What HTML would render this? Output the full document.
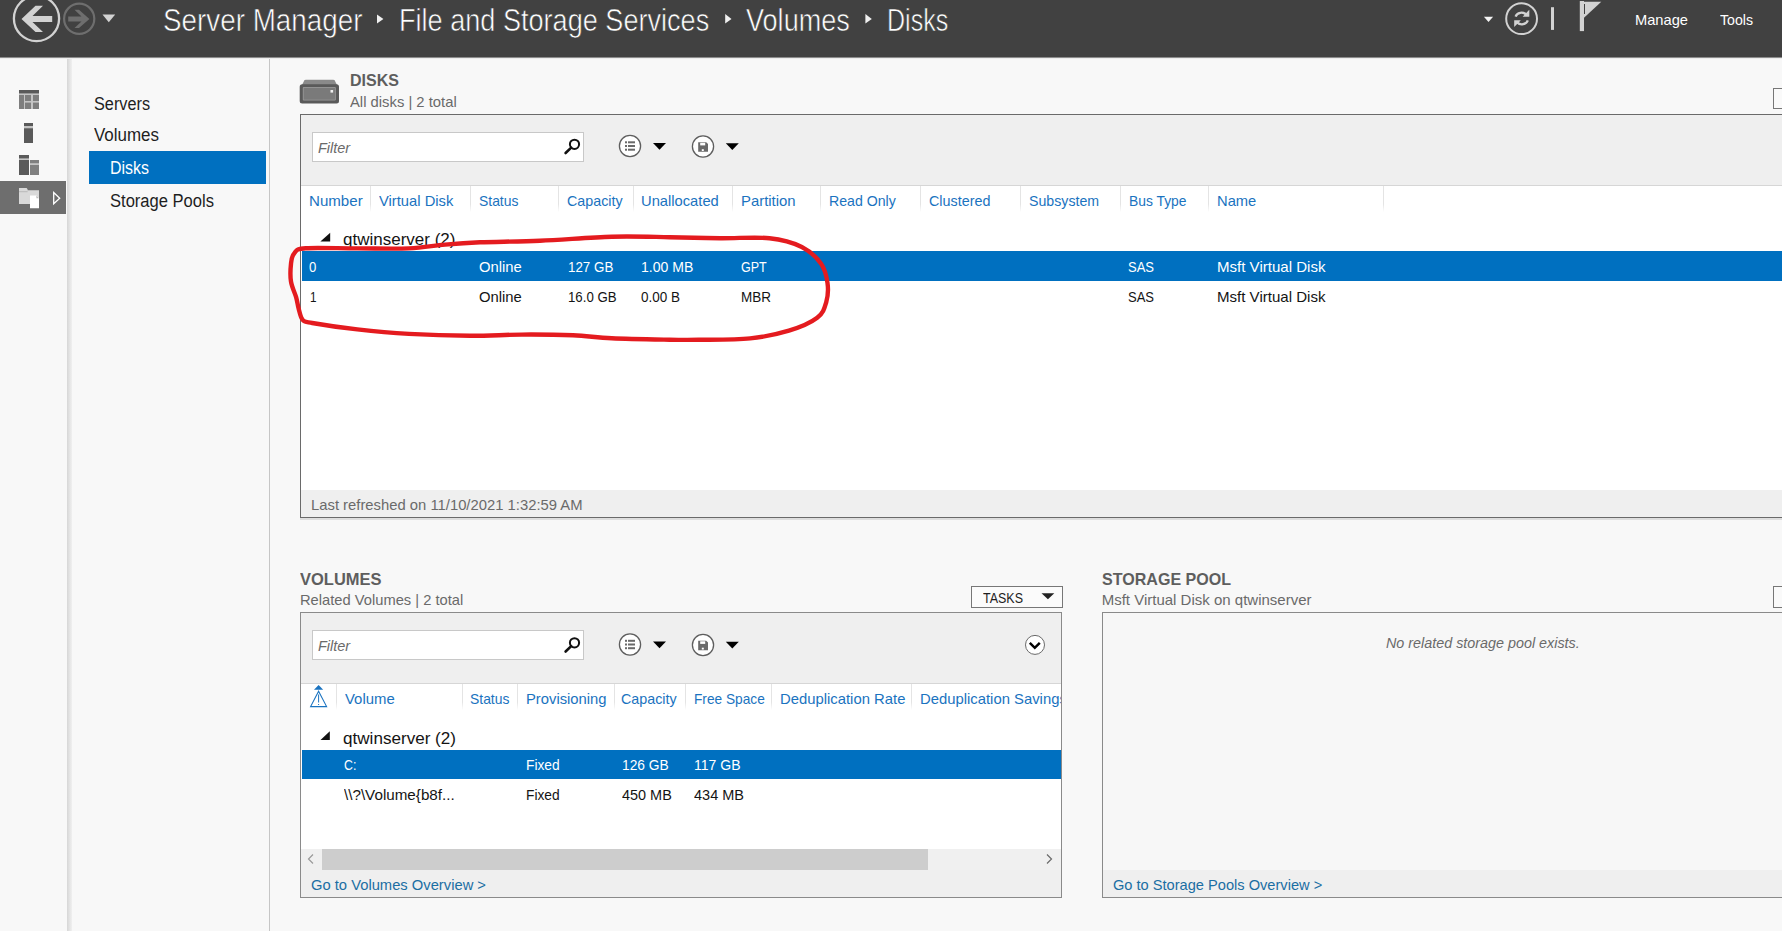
<!DOCTYPE html>
<html><head><meta charset="utf-8"><style>
html,body{margin:0;padding:0;}
body{width:1782px;height:931px;overflow:hidden;position:relative;background:#f8f8f8;font-family:"Liberation Sans",sans-serif;}
.t{position:absolute;white-space:nowrap;transform-origin:0 0;}
</style></head><body>
<div style="position:absolute;left:0px;top:0px;width:1782px;height:57px;background:#414141"></div>
<div style="position:absolute;left:0px;top:57px;width:1782px;height:1px;background:#8c8c8c"></div>
<div style="position:absolute;left:0px;top:58px;width:1782px;height:1px;background:#ececec"></div>
<svg style="position:absolute;left:0;top:0" width="130" height="57" viewBox="0 0 130 57">
<circle cx="36.5" cy="18.5" r="22.6" fill="none" stroke="#d2d2d2" stroke-width="2.3"/>
<path d="M21.5 19 L35.5 5.8 L43 5.8 L32.5 16 L52.2 16 L52.2 22 L32.5 22 L43 32 L35.5 32 Z" fill="#d2d2d2"/>
<circle cx="79.2" cy="18.8" r="15.1" fill="none" stroke="#6e6e6e" stroke-width="2.2"/>
<path d="M89.4 19 L79 9.8 L74.5 9.8 L81.5 16.5 L68.2 16.5 L68.2 21.5 L81.5 21.5 L74.5 28.1 L79 28.1 Z" fill="#6e6e6e"/>
<path d="M102.5 14.6 L115.2 14.6 L108.8 22.2 Z" fill="#d2d2d2"/>
</svg>
<span class="t" style="left:162.50px;top:4.56px;font-size:31px;line-height:31px;color:#ffffff;transform:scaleX(0.8976);-webkit-text-stroke:0.6px #414141;">Server Manager</span>
<svg style="position:absolute;left:0;top:0" width="1000" height="57"><path d="M377 14.6 L383.4 19.1 L377 23.6 Z" fill="#f0f0f0"/><path d="M725.2 14.1 L731.5 18.9 L725.2 23.6 Z" fill="#f0f0f0"/><path d="M865.4 14.1 L871.8 18.9 L865.4 23.6 Z" fill="#f0f0f0"/></svg>
<span class="t" style="left:399.00px;top:4.56px;font-size:31px;line-height:31px;color:#ffffff;transform:scaleX(0.8739);-webkit-text-stroke:0.6px #414141;">File and Storage Services</span>
<span class="t" style="left:746.20px;top:4.56px;font-size:31px;line-height:31px;color:#ffffff;transform:scaleX(0.8731);-webkit-text-stroke:0.6px #414141;">Volumes</span>
<span class="t" style="left:887.00px;top:4.56px;font-size:31px;line-height:31px;color:#ffffff;transform:scaleX(0.8074);-webkit-text-stroke:0.6px #414141;">Disks</span>
<svg style="position:absolute;left:1470px;top:0" width="150" height="57" viewBox="1470 0 150 57">
<path d="M1483.9 16.8 L1493.1 16.8 L1488.5 22 Z" fill="#f4f4f4"/>
<circle cx="1521.6" cy="18.7" r="15.4" fill="none" stroke="#d2d2d2" stroke-width="2"/>
<path d="M1515.6 16.6 A6.2 5.6 0 0 1 1526.2 14.6" fill="none" stroke="#d2d2d2" stroke-width="2.3"/>
<path d="M1529.3 9.8 L1529.3 16.8 L1522.6 16.8 Z" fill="#d2d2d2"/>
<path d="M1527.8 20.4 A6.2 5.6 0 0 1 1517.2 22.4" fill="none" stroke="#d2d2d2" stroke-width="2.3"/>
<path d="M1514.2 27 L1514.2 20.2 L1520.9 20.2 Z" fill="#d2d2d2"/>
<rect x="1551" y="7.2" width="3" height="22.7" fill="#d2d2d2"/>
<rect x="1579.8" y="1" width="4.2" height="30.1" fill="#d2d2d2"/>
<path d="M1584 1.8 L1601.3 1.8 L1584 17.8 Z" fill="#d2d2d2"/><rect x="1584" y="4" width="1" height="10" fill="#414141"/>
</svg>
<span class="t" style="left:1634.50px;top:12.00px;font-size:15px;line-height:15px;color:#ffffff;transform:scaleX(0.9774);">Manage</span>
<span class="t" style="left:1720.00px;top:12.00px;font-size:15px;line-height:15px;color:#ffffff;transform:scaleX(0.9422);">Tools</span>
<div style="position:absolute;left:67px;top:59px;width:5px;height:872px;background:linear-gradient(to right,#d6d6d6,#e6e6e6 60%,#f0f0f0)"></div>
<div style="position:absolute;left:0px;top:181px;width:66px;height:33px;background:#6e6e6e"></div>
<svg style="position:absolute;left:0;top:80px" width="66" height="140" viewBox="0 80 66 140">
<rect x="19" y="90" width="20" height="3.6" fill="#5a5a5a"/>
<rect x="19" y="94" width="20" height="15" fill="#c4c4c4"/>
<rect x="19" y="95" width="5" height="14" fill="#7e7e7e"/>
<rect x="25" y="95" width="6" height="6" fill="#7e7e7e"/>
<rect x="33" y="95" width="6" height="6" fill="#7e7e7e"/>
<rect x="25" y="102.6" width="6" height="6.4" fill="#7e7e7e"/>
<rect x="33" y="102.6" width="6" height="6.4" fill="#7e7e7e"/>
<rect x="24" y="123" width="9" height="3" fill="#5a5a5a"/>
<rect x="24" y="126" width="9" height="2" fill="#c4c4c4"/>
<rect x="24" y="128.2" width="9" height="14.8" fill="#5a5a5a"/>
<rect x="19" y="155" width="10" height="3.7" fill="#5a5a5a"/>
<rect x="19" y="158.7" width="10" height="1.3" fill="#c4c4c4"/>
<rect x="19" y="160" width="10" height="15" fill="#5a5a5a"/>
<rect x="30" y="160" width="9" height="3.6" fill="#808080"/>
<rect x="30" y="163.6" width="9" height="1.4" fill="#c4c4c4"/>
<rect x="30" y="165" width="9" height="10" fill="#808080"/>
<path d="M19 188 L26.6 188 L27.6 189.2 L27.6 190.3 L39 190.3 L39 204 L19 204 Z" fill="#d9d9d9"/>
<rect x="19" y="191.2" width="8.6" height="1" fill="#b8b8b8"/>
<path d="M30 195.6 L36.6 195.6 L39 198 L39 208.2 L30 208.2 Z" fill="#ffffff"/>
<path d="M36.4 195.6 L39 198.2 L36.4 198.2 Z" fill="#bdbdbd"/>
<path d="M53.7 192.6 L59.7 198.2 L53.7 203.8 Z" fill="none" stroke="#ffffff" stroke-width="1.3"/>
</svg>
<div style="position:absolute;left:269px;top:59px;width:1px;height:872px;background:#c6c6c6"></div>
<div style="position:absolute;left:89px;top:151px;width:177px;height:33px;background:#0070c0"></div>
<span class="t" style="left:93.90px;top:94.76px;font-size:18px;line-height:18px;color:#1e1e1e;transform:scaleX(0.9031);">Servers</span>
<span class="t" style="left:93.90px;top:126.36px;font-size:18px;line-height:18px;color:#1e1e1e;transform:scaleX(0.9416);">Volumes</span>
<span class="t" style="left:109.50px;top:159.46px;font-size:18px;line-height:18px;color:#ffffff;transform:scaleX(0.8862);">Disks</span>
<span class="t" style="left:109.50px;top:191.56px;font-size:18px;line-height:18px;color:#1e1e1e;transform:scaleX(0.9197);">Storage Pools</span>
<svg style="position:absolute;left:299px;top:79px" width="41" height="26" viewBox="299 79 41 26">
<path d="M302 85 L304.5 80 Q305 79.7 306 79.7 L333 79.7 Q334 79.7 334.5 80 L337 85 Z" fill="#8a8a8a"/>
<rect x="299.7" y="84.3" width="39.3" height="19.3" rx="2.5" fill="#5a5a5a"/>
<rect x="302.8" y="87" width="33" height="13.5" rx="1" fill="#9a9a9a"/>
<rect x="303.6" y="87.8" width="31.4" height="11.9" fill="#7a7a7a"/>
<rect x="330.5" y="90" width="2.6" height="2.6" fill="#f0f0f0"/>
</svg>
<span class="t" style="left:350.00px;top:72.31px;font-size:17px;line-height:17px;color:#5e5e5e;transform:scaleX(0.9416);font-weight:700;">DISKS</span>
<span class="t" style="left:350.00px;top:93.90px;font-size:15px;line-height:15px;color:#6a6a6a;transform:scaleX(0.9869);">All disks | 2 total</span>
<div style="position:absolute;left:1773px;top:88px;width:20px;height:21px;box-sizing:border-box;border:1px solid #777;background:#fafafa"></div>
<div style="position:absolute;left:300px;top:114px;width:1500px;height:404px;box-sizing:border-box;border:1px solid #6a6a6a;background:#fff"></div>
<div style="position:absolute;left:301px;top:115px;width:1490px;height:70px;background:#efefef"></div>
<div style="position:absolute;left:301px;top:185px;width:1490px;height:1px;background:#d6d6d6"></div>
<div style="position:absolute;left:312px;top:132px;width:272px;height:30px;box-sizing:border-box;border:1px solid #c8c8c8;background:#fff"></div>
<span class="t" style="left:317.70px;top:140.30px;font-size:15px;line-height:15px;color:#6a6a6a;transform:scaleX(0.9657);font-style:italic;">Filter</span>
<svg style="position:absolute;left:0;top:0" width="1782" height="931">
<circle cx="574.5" cy="144.3" r="4.6" fill="none" stroke="#111" stroke-width="2"/>
<path d="M571.2 147.6 L565.6 153" stroke="#111" stroke-width="2.6" stroke-linecap="round"/>
<circle cx="630" cy="146" r="10.6" fill="#fff" stroke="#5e5e5e" stroke-width="1.3"/>
<rect x="625" y="141.3" width="2" height="2" fill="#6a6a6a"/><rect x="628" y="141.3" width="7" height="2" fill="#6a6a6a"/>
<rect x="625" y="145" width="2" height="2" fill="#6a6a6a"/><rect x="628" y="145" width="7" height="2" fill="#6a6a6a"/>
<rect x="625" y="148.7" width="2" height="2" fill="#6a6a6a"/><rect x="628" y="148.7" width="7" height="2" fill="#6a6a6a"/>
<path d="M653 143 L666 143 L659.5 149.8 Z" fill="#000"/>
<circle cx="703" cy="146.5" r="10.6" fill="#fff" stroke="#5e5e5e" stroke-width="1.3"/>
<path d="M698.2 142.2 L706.2 142.2 L708 144 L708 151.8 L698.2 151.8 Z" fill="#6a6a6a"/>
<rect x="700.2" y="142.8" width="5" height="2.6" fill="#fff"/>
<rect x="701.8" y="149.2" width="2" height="1.8" fill="#fff"/>
<path d="M725.8 143.2 L738.8 143.2 L732.3 150 Z" fill="#000"/>
</svg>
<div style="position:absolute;left:370px;top:186px;width:1px;height:26px;background:linear-gradient(#e4e4e4,#e4e4e4 70%,#fff)"></div>
<div style="position:absolute;left:470px;top:186px;width:1px;height:26px;background:linear-gradient(#e4e4e4,#e4e4e4 70%,#fff)"></div>
<div style="position:absolute;left:558px;top:186px;width:1px;height:26px;background:linear-gradient(#e4e4e4,#e4e4e4 70%,#fff)"></div>
<div style="position:absolute;left:633px;top:186px;width:1px;height:26px;background:linear-gradient(#e4e4e4,#e4e4e4 70%,#fff)"></div>
<div style="position:absolute;left:732px;top:186px;width:1px;height:26px;background:linear-gradient(#e4e4e4,#e4e4e4 70%,#fff)"></div>
<div style="position:absolute;left:820px;top:186px;width:1px;height:26px;background:linear-gradient(#e4e4e4,#e4e4e4 70%,#fff)"></div>
<div style="position:absolute;left:920px;top:186px;width:1px;height:26px;background:linear-gradient(#e4e4e4,#e4e4e4 70%,#fff)"></div>
<div style="position:absolute;left:1020px;top:186px;width:1px;height:26px;background:linear-gradient(#e4e4e4,#e4e4e4 70%,#fff)"></div>
<div style="position:absolute;left:1120px;top:186px;width:1px;height:26px;background:linear-gradient(#e4e4e4,#e4e4e4 70%,#fff)"></div>
<div style="position:absolute;left:1208px;top:186px;width:1px;height:26px;background:linear-gradient(#e4e4e4,#e4e4e4 70%,#fff)"></div>
<div style="position:absolute;left:1383px;top:186px;width:1px;height:26px;background:linear-gradient(#e4e4e4,#e4e4e4 70%,#fff)"></div>
<span class="t" style="left:309.00px;top:193.30px;font-size:15px;line-height:15px;color:#1a73c0;transform:scaleX(1.0063);">Number</span>
<span class="t" style="left:378.80px;top:193.30px;font-size:15px;line-height:15px;color:#1a73c0;transform:scaleX(0.9836);">Virtual Disk</span>
<span class="t" style="left:478.70px;top:193.30px;font-size:15px;line-height:15px;color:#1a73c0;transform:scaleX(0.9265);">Status</span>
<span class="t" style="left:566.70px;top:193.30px;font-size:15px;line-height:15px;color:#1a73c0;transform:scaleX(0.9529);">Capacity</span>
<span class="t" style="left:640.80px;top:193.30px;font-size:15px;line-height:15px;color:#1a73c0;transform:scaleX(0.9819);">Unallocated</span>
<span class="t" style="left:741.00px;top:193.30px;font-size:15px;line-height:15px;color:#1a73c0;transform:scaleX(0.9925);">Partition</span>
<span class="t" style="left:829.00px;top:193.30px;font-size:15px;line-height:15px;color:#1a73c0;transform:scaleX(0.9425);">Read Only</span>
<span class="t" style="left:929.00px;top:193.30px;font-size:15px;line-height:15px;color:#1a73c0;transform:scaleX(0.9564);">Clustered</span>
<span class="t" style="left:1028.70px;top:193.30px;font-size:15px;line-height:15px;color:#1a73c0;transform:scaleX(0.9446);">Subsystem</span>
<span class="t" style="left:1128.90px;top:193.30px;font-size:15px;line-height:15px;color:#1a73c0;transform:scaleX(0.9237);">Bus Type</span>
<span class="t" style="left:1216.70px;top:193.30px;font-size:15px;line-height:15px;color:#1a73c0;transform:scaleX(0.9822);">Name</span>
<svg style="position:absolute;left:0;top:0" width="400" height="260"><path d="M330.2 232.8 L330.2 241.4 L320.4 241.4 Z" fill="#111"/></svg>
<span class="t" style="left:343.00px;top:230.61px;font-size:17px;line-height:17px;color:#141414;">qtwinserver (2)</span>
<div style="position:absolute;left:302px;top:251px;width:1480px;height:30px;background:#0070c0"></div>
<span class="t" style="left:309.00px;top:258.90px;font-size:15px;line-height:15px;color:#ffffff;transform:scaleX(0.8769);">0</span>
<span class="t" style="left:478.70px;top:258.90px;font-size:15px;line-height:15px;color:#ffffff;transform:scaleX(0.9873);">Online</span>
<span class="t" style="left:567.70px;top:258.90px;font-size:15px;line-height:15px;color:#ffffff;transform:scaleX(0.8909);">127 GB</span>
<span class="t" style="left:641.40px;top:258.90px;font-size:15px;line-height:15px;color:#ffffff;transform:scaleX(0.9378);">1.00 MB</span>
<span class="t" style="left:741.00px;top:258.90px;font-size:15px;line-height:15px;color:#ffffff;transform:scaleX(0.8337);">GPT</span>
<span class="t" style="left:1128.00px;top:258.90px;font-size:15px;line-height:15px;color:#ffffff;transform:scaleX(0.8667);">SAS</span>
<span class="t" style="left:1216.70px;top:258.90px;font-size:15px;line-height:15px;color:#ffffff;transform:scaleX(1.0036);">Msft Virtual Disk</span>
<span class="t" style="left:309.50px;top:288.70px;font-size:15px;line-height:15px;color:#141414;transform:scaleX(0.7808);">1</span>
<span class="t" style="left:478.70px;top:288.70px;font-size:15px;line-height:15px;color:#141414;transform:scaleX(0.9873);">Online</span>
<span class="t" style="left:567.70px;top:288.70px;font-size:15px;line-height:15px;color:#141414;transform:scaleX(0.8828);">16.0 GB</span>
<span class="t" style="left:641.00px;top:288.70px;font-size:15px;line-height:15px;color:#141414;transform:scaleX(0.8997);">0.00 B</span>
<span class="t" style="left:741.00px;top:288.70px;font-size:15px;line-height:15px;color:#141414;transform:scaleX(0.8999);">MBR</span>
<span class="t" style="left:1128.00px;top:288.70px;font-size:15px;line-height:15px;color:#141414;transform:scaleX(0.8667);">SAS</span>
<span class="t" style="left:1216.70px;top:288.70px;font-size:15px;line-height:15px;color:#141414;transform:scaleX(1.0036);">Msft Virtual Disk</span>
<div style="position:absolute;left:301px;top:490px;width:1490px;height:27px;background:#efefef"></div>
<div style="position:absolute;left:300px;top:517px;width:1482px;height:1px;background:#6a6a6a"></div>
<div style="position:absolute;left:300px;top:518px;width:1482px;height:2px;background:#dedede"></div>
<span class="t" style="left:310.50px;top:497.30px;font-size:15px;line-height:15px;color:#6a6a6a;transform:scaleX(0.9875);">Last refreshed on 11/10/2021 1:32:59 AM</span>
<svg style="position:absolute;left:0;top:0" width="900" height="400"><path d="M305.8 248.2 C316.3 247.4 340.1 248.4 357.3 248.4 C374.5 248.4 394.3 249.0 408.9 248.4 C423.5 247.8 433.1 245.6 445.0 244.6 C456.9 243.6 464.2 243.0 480.0 242.3 C495.8 241.7 518.0 241.6 540.0 240.7 C562.0 239.8 590.2 237.3 611.8 236.7 C633.4 236.1 651.7 236.9 669.7 237.2 C687.7 237.4 703.4 238.0 720.0 238.2 C736.6 238.4 755.9 236.8 769.5 238.2 C783.1 239.6 793.2 242.7 801.8 246.9 C810.4 251.2 816.8 257.7 821.1 263.7 C825.4 269.7 826.6 276.6 827.5 283.0 C828.4 289.4 827.9 296.5 826.2 302.3 C824.5 308.1 823.4 313.1 817.2 317.8 C811.0 322.5 800.1 327.3 788.9 330.7 C777.7 334.1 765.2 336.9 750.2 338.4 C735.2 339.9 712.1 339.6 698.7 339.8 C685.3 340.0 684.2 340.0 669.7 339.7 C655.2 339.4 627.9 338.9 611.8 338.2 C595.7 337.5 588.0 335.9 573.0 335.3 C558.0 334.7 538.7 334.5 521.5 334.6 C504.3 334.7 488.8 335.9 470.0 335.8 C451.2 335.7 427.7 335.0 408.9 333.9 C390.1 332.8 373.4 331.2 357.3 329.4 C341.2 327.6 321.3 324.6 312.2 323.0 C303.1 321.4 304.9 322.1 302.6 319.7 C300.4 317.3 299.8 312.6 298.7 308.8 C297.6 305.1 297.4 301.7 296.1 297.2 C294.8 292.7 291.9 287.3 291.0 281.7 C290.1 276.1 290.5 268.4 291.0 263.7 C291.5 259.0 291.7 256.0 294.2 253.4 C296.7 250.8 295.3 249.0 305.8 248.2 " fill="none" stroke="#e41b1f" stroke-width="4.4" stroke-linejoin="round"/></svg>
<span class="t" style="left:299.50px;top:570.51px;font-size:17px;line-height:17px;color:#5e5e5e;transform:scaleX(0.9695);font-weight:700;">VOLUMES</span>
<span class="t" style="left:299.50px;top:592.30px;font-size:15px;line-height:15px;color:#6a6a6a;transform:scaleX(0.9802);">Related Volumes | 2 total</span>
<div style="position:absolute;left:971px;top:586px;width:92px;height:22px;box-sizing:border-box;border:1px solid #777;background:#fbfbfb"></div>
<span class="t" style="left:982.80px;top:590.30px;font-size:15px;line-height:15px;color:#1e1e1e;transform:scaleX(0.8320);">TASKS</span>
<svg style="position:absolute;left:0;top:0" width="1100" height="620"><path d="M1041.5 593.2 L1054.3 593.2 L1047.9 599.2 Z" fill="#222"/></svg>
<div style="position:absolute;left:300px;top:612px;width:762px;height:286px;box-sizing:border-box;border:1px solid #8a8a8a;background:#fff"></div>
<div style="position:absolute;left:301px;top:613px;width:760px;height:70px;background:#efefef"></div>
<div style="position:absolute;left:301px;top:683px;width:760px;height:1px;background:#d6d6d6"></div>
<div style="position:absolute;left:312px;top:630px;width:272px;height:30px;box-sizing:border-box;border:1px solid #c8c8c8;background:#fff"></div>
<span class="t" style="left:317.70px;top:638.30px;font-size:15px;line-height:15px;color:#6a6a6a;transform:scaleX(0.9657);font-style:italic;">Filter</span>
<svg style="position:absolute;left:0;top:0" width="1782" height="931">
<circle cx="574.5" cy="642.8" r="4.6" fill="none" stroke="#111" stroke-width="2"/>
<path d="M571.2 646.1 L565.6 651.5" stroke="#111" stroke-width="2.6" stroke-linecap="round"/>
<circle cx="630" cy="644.5" r="10.6" fill="#fff" stroke="#5e5e5e" stroke-width="1.3"/>
<rect x="625" y="639.8" width="2" height="2" fill="#6a6a6a"/><rect x="628" y="639.8" width="7" height="2" fill="#6a6a6a"/>
<rect x="625" y="643.5" width="2" height="2" fill="#6a6a6a"/><rect x="628" y="643.5" width="7" height="2" fill="#6a6a6a"/>
<rect x="625" y="647.2" width="2" height="2" fill="#6a6a6a"/><rect x="628" y="647.2" width="7" height="2" fill="#6a6a6a"/>
<path d="M653 641.5 L666 641.5 L659.5 648.3 Z" fill="#000"/>
<circle cx="703" cy="645.0" r="10.6" fill="#fff" stroke="#5e5e5e" stroke-width="1.3"/>
<path d="M698.2 640.7 L706.2 640.7 L708 642.5 L708 650.3 L698.2 650.3 Z" fill="#6a6a6a"/>
<rect x="700.2" y="641.3" width="5" height="2.6" fill="#fff"/>
<rect x="701.8" y="647.7" width="2" height="1.8" fill="#fff"/>
<path d="M725.8 641.7 L738.8 641.7 L732.3 648.5 Z" fill="#000"/>
</svg>
<svg style="position:absolute;left:0;top:0" width="1100" height="720">
<circle cx="1035" cy="644.9" r="9.5" fill="#fff" stroke="#6a6a6a" stroke-width="1"/>
<path d="M1029.8 642.8 L1034.8 647.8 L1039.8 642.8" fill="none" stroke="#000" stroke-width="2.5"/>
<path d="M318.6 685 L323.2 689.8 L314 689.8 Z" fill="#1a73c0"/>
<path d="M318.6 691.2 L326.6 706.6 L310.6 706.6 Z" fill="none" stroke="#1a73c0" stroke-width="1.1" stroke-linejoin="miter"/>
<rect x="318.1" y="694.5" width="1" height="8" fill="#1a73c0"/>
<rect x="318.1" y="704" width="1" height="1" fill="#1a73c0"/>
</svg>
<div style="position:absolute;left:336px;top:684px;width:1px;height:26px;background:linear-gradient(#e4e4e4,#e4e4e4 70%,#fff)"></div>
<div style="position:absolute;left:461.5px;top:684px;width:1px;height:26px;background:linear-gradient(#e4e4e4,#e4e4e4 70%,#fff)"></div>
<div style="position:absolute;left:517px;top:684px;width:1px;height:26px;background:linear-gradient(#e4e4e4,#e4e4e4 70%,#fff)"></div>
<div style="position:absolute;left:613.5px;top:684px;width:1px;height:26px;background:linear-gradient(#e4e4e4,#e4e4e4 70%,#fff)"></div>
<div style="position:absolute;left:685.3px;top:684px;width:1px;height:26px;background:linear-gradient(#e4e4e4,#e4e4e4 70%,#fff)"></div>
<div style="position:absolute;left:771.2px;top:684px;width:1px;height:26px;background:linear-gradient(#e4e4e4,#e4e4e4 70%,#fff)"></div>
<div style="position:absolute;left:911.3px;top:684px;width:1px;height:26px;background:linear-gradient(#e4e4e4,#e4e4e4 70%,#fff)"></div>
<span class="t" style="left:344.50px;top:690.80px;font-size:15px;line-height:15px;color:#1a73c0;transform:scaleX(0.9935);">Volume</span>
<span class="t" style="left:469.50px;top:690.80px;font-size:15px;line-height:15px;color:#1a73c0;transform:scaleX(0.9265);">Status</span>
<span class="t" style="left:525.50px;top:690.80px;font-size:15px;line-height:15px;color:#1a73c0;transform:scaleX(0.9852);">Provisioning</span>
<span class="t" style="left:621.40px;top:690.80px;font-size:15px;line-height:15px;color:#1a73c0;transform:scaleX(0.9529);">Capacity</span>
<span class="t" style="left:693.60px;top:690.80px;font-size:15px;line-height:15px;color:#1a73c0;transform:scaleX(0.9130);">Free Space</span>
<span class="t" style="left:779.80px;top:690.80px;font-size:15px;line-height:15px;color:#1a73c0;transform:scaleX(0.9893);">Deduplication Rate</span>
<div style="position:absolute;left:911px;top:680px;width:150px;height:40px;overflow:hidden">
<span class="t" style="left:8.90px;top:10.80px;font-size:15px;line-height:15px;color:#1a73c0;transform:scaleX(0.9891);">Deduplication Savings</span>
</div>
<svg style="position:absolute;left:0;top:0" width="400" height="760"><path d="M329.8 731.2 L329.8 740 L320.5 740 Z" fill="#111"/></svg>
<span class="t" style="left:343.00px;top:729.61px;font-size:17px;line-height:17px;color:#141414;transform:scaleX(1.0052);">qtwinserver (2)</span>
<div style="position:absolute;left:302px;top:749.5px;width:759px;height:29.5px;background:#0070c0"></div>
<span class="t" style="left:344.40px;top:756.90px;font-size:15px;line-height:15px;color:#ffffff;transform:scaleX(0.8200);">C:</span>
<span class="t" style="left:525.50px;top:756.90px;font-size:15px;line-height:15px;color:#ffffff;transform:scaleX(0.9189);">Fixed</span>
<span class="t" style="left:621.60px;top:756.90px;font-size:15px;line-height:15px;color:#ffffff;transform:scaleX(0.9184);">126 GB</span>
<span class="t" style="left:694.00px;top:756.90px;font-size:15px;line-height:15px;color:#ffffff;transform:scaleX(0.9364);">117 GB</span>
<span class="t" style="left:344.00px;top:786.90px;font-size:15px;line-height:15px;color:#141414;transform:scaleX(1.0134);">\\?\Volume{b8f...</span>
<span class="t" style="left:525.50px;top:786.90px;font-size:15px;line-height:15px;color:#141414;transform:scaleX(0.9189);">Fixed</span>
<span class="t" style="left:621.50px;top:786.90px;font-size:15px;line-height:15px;color:#141414;transform:scaleX(0.9630);">450 MB</span>
<span class="t" style="left:693.50px;top:786.90px;font-size:15px;line-height:15px;color:#141414;transform:scaleX(0.9669);">434 MB</span>
<div style="position:absolute;left:301px;top:849px;width:760px;height:21px;background:#f0f0f0"></div>
<div style="position:absolute;left:322px;top:849px;width:606px;height:21px;background:#cdcdcd"></div>
<svg style="position:absolute;left:0;top:0" width="1100" height="880">
<path d="M313 854.5 L308.5 859 L313 863.5" fill="none" stroke="#9a9a9a" stroke-width="1.2"/>
<path d="M1047 854.5 L1051.5 859 L1047 863.5" fill="none" stroke="#6a6a6a" stroke-width="1.2"/>
</svg>
<div style="position:absolute;left:301px;top:870px;width:760px;height:27px;background:#efefef"></div>
<span class="t" style="left:311.00px;top:876.80px;font-size:15px;line-height:15px;color:#1b6ea3;transform:scaleX(0.9831);">Go to Volumes Overview &gt;</span>
<span class="t" style="left:1101.70px;top:570.61px;font-size:17px;line-height:17px;color:#5e5e5e;transform:scaleX(0.9448);font-weight:700;">STORAGE POOL</span>
<span class="t" style="left:1101.70px;top:591.80px;font-size:15px;line-height:15px;color:#6a6a6a;">Msft Virtual Disk on qtwinserver</span>
<div style="position:absolute;left:1773px;top:586px;width:20px;height:22px;box-sizing:border-box;border:1px solid #777;background:#fafafa"></div>
<div style="position:absolute;left:1102px;top:612px;width:700px;height:286px;box-sizing:border-box;border:1px solid #8a8a8a;background:#f7f7f7"></div>
<span class="t" style="left:1386.00px;top:635.00px;font-size:15px;line-height:15px;color:#6a6a6a;transform:scaleX(0.9560);font-style:italic;">No related storage pool exists.</span>
<div style="position:absolute;left:1103px;top:870px;width:690px;height:27px;background:#efefef"></div>
<span class="t" style="left:1112.60px;top:877.30px;font-size:15px;line-height:15px;color:#1b6ea3;transform:scaleX(0.9744);">Go to Storage Pools Overview &gt;</span>
</body></html>
